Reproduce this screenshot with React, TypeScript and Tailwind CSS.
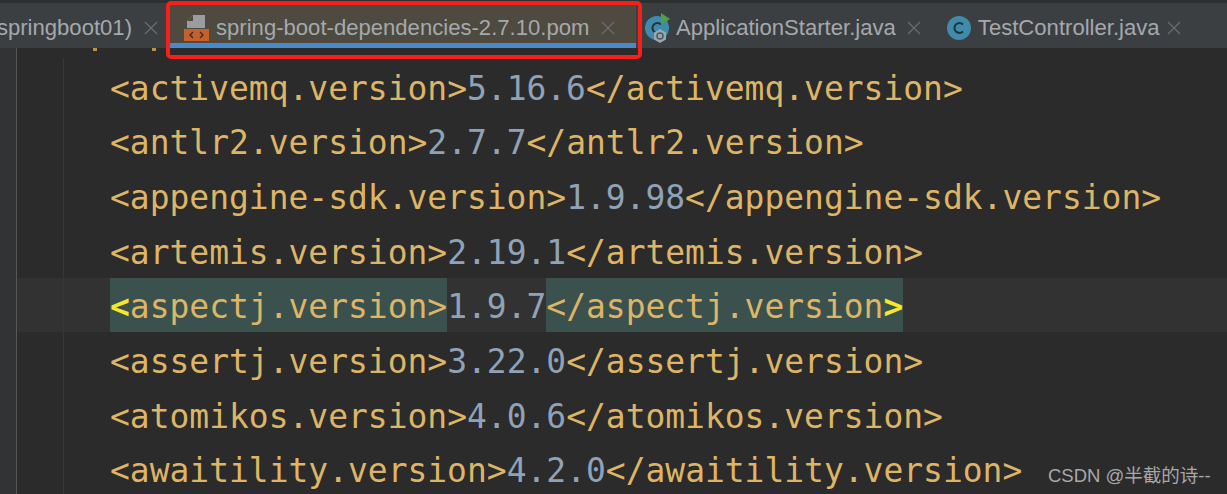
const mono = "font-['DejaVu_Sans_Mono','Liberation_Mono',monospace]"

const lines = [
  ["activemq.version", "5.16.6"],
  ["antlr2.version", "2.7.7"],
  ["appengine-sdk.version", "1.9.98"],
  ["artemis.version", "2.19.1"],
  ["aspectj.version", "1.9.7"],
  ["assertj.version", "3.22.0"],
  ["atomikos.version", "4.0.6"],
  ["awaitility.version", "4.2.0"],
]

function CloseIcon({ className }: { className?: string }) {
  return (
    <svg width="14" height="14" viewBox="0 0 14 14" className={`shrink-0 ${className ?? ""}`}>
      <path d="M1 1l12 12M13 1L1 13" stroke="#696c6e" strokeWidth="1.4" fill="none" />
    </svg>
  )
}

function PomIcon() {
  return (
    <svg width="26" height="26" viewBox="0 0 26 26" className="shrink-0">
      <path d="M9 0h12v13H3V6z" fill="#9a9c9e" />
      <path d="M9 0v6H3z" fill="#4e4a3f" />
      <rect x="0" y="14" width="25" height="12" fill="#c6602b" />
      <path d="M9 17l-3 3 3 3M16 17l3 3-3 3" stroke="#2f2f2f" strokeWidth="1.4" fill="none" />
    </svg>
  )
}

function ClassIcon({ run }: { run?: boolean }) {
  return (
    <svg width="32" height="34" viewBox="0 0 32 34" className="shrink-0">
      <circle cx="13" cy="17" r="12" fill="#3f8bab" />
      <path d="M17 13.500a5 5 0 1 0 0 7" stroke="#24323a" strokeWidth="2" fill="none" />
      {run && <path d="M17 2l9 6-9 6z" fill="#4f9e4a" />}
      {run && <path d="M16 18l6 3.500v7L16 32l-6-3.500v-7z" fill="#9aa7ae" />}
      {run && <circle cx="16" cy="25" r="3" stroke="#4d5a61" strokeWidth="1.500" fill="none" />}
    </svg>
  )
}

function CodeLine({ tag, value, active }: { tag: string; value: string; active?: boolean }) {
  if (active) {
    return (
      <div className="-mt-[2px] mb-[2px] flex h-[54.7px] items-stretch bg-[#323232] pl-[110px]">
        <span className="flex items-center bg-[#3b514d] pt-[4px] text-[#deb566]">
          <span className="font-bold text-[#f5e82a]">&lt;</span>
          {tag}&gt;
        </span>
        <span className="flex items-center pt-[4px] text-[#8fa3b8]">{value}</span>
        <span className="flex items-center bg-[#3b514d] pt-[4px] text-[#deb566]">
          &lt;/{tag}
          <span className="font-bold text-[#f5e82a]">&gt;</span>
        </span>
      </div>
    )
  }
  return (
    <div className="flex h-[54.7px] items-center pl-[110px]">
      <span className="text-[#deb566]">&lt;{tag}&gt;</span>
      <span className="text-[#8fa3b8]">{value}</span>
      <span className="text-[#deb566]">&lt;/{tag}&gt;</span>
    </div>
  )
}

export default function App() {
  return (
    <div className="relative h-[494px] w-[1227px] overflow-hidden bg-[#2b2b2b]">
      {/* tab bar */}
      <div className="flex h-[48px] items-stretch border-t-[3px] border-[#2e2f30] bg-[#3c3f41] font-['Liberation_Sans',sans-serif] text-[22.100px] text-[#a3a9ad]">
        <div className="flex w-[170px] shrink-0 items-center justify-end overflow-hidden pt-[5px] pr-[12px]">
          <span className="whitespace-nowrap">springboot01)</span>
          <CloseIcon className="ml-[12px]" />
        </div>
        <div className="mt-[2px] flex w-[466px] shrink-0 items-center border-b-[5px] border-[#4a88c7] bg-[#4e4a3f] pt-[7px] pl-[14px]">
          <PomIcon />
          <span className="ml-[6px] whitespace-nowrap">spring-boot-dependencies-2.7.10.pom</span>
          <CloseIcon className="ml-[12px]" />
        </div>
        <div className="flex items-center pt-[5px] pl-[8px]">
          <ClassIcon run />
          <span className="whitespace-nowrap">ApplicationStarter.java</span>
          <CloseIcon className="ml-[11px]" />
        </div>
        <div className="flex items-center pt-[5px] pl-[25px]">
          <ClassIcon />
          <span className="whitespace-nowrap">TestController.java</span>
          <CloseIcon className="ml-[7px]" />
        </div>
      </div>

      {/* editor */}
      <div className="flex h-[446px]">
        <div className="relative z-10 w-[17px] shrink-0 border-r border-[#55585a] bg-[#313335]" />
        <div className={`relative flex-1 pt-[13px] ${mono} text-[32.950px] whitespace-pre`}>
          <div className="absolute left-[46px] top-[10px] h-full w-px bg-[#373737]" />
          {/* bottom edge of the line scrolled out of view */}
          <div className="absolute left-[76px] top-0 h-[3px] w-[4px] bg-[#b8924f]" />
          <div className="absolute left-[135px] top-0 h-[3px] w-[4px] bg-[#b8924f]" />
          <div className="-ml-[17px]">
            {lines.map((l, i) => (
              <CodeLine key={l[0]} tag={l[0]} value={l[1]} active={i === 4} />
            ))}
          </div>
        </div>
      </div>

      {/* annotation */}
      <div className="absolute left-[166px] top-px h-[58px] w-[476px] rounded-[5px] border-[4px] border-[#f5201a]" />

      {/* watermark */}
      <div className="absolute left-[1048px] top-[462px] font-['Liberation_Sans','Noto_Sans_CJK_SC',sans-serif] text-[18.500px] text-[#a8a8a8]">
        CSDN @半截的诗--
      </div>
    </div>
  )
}
